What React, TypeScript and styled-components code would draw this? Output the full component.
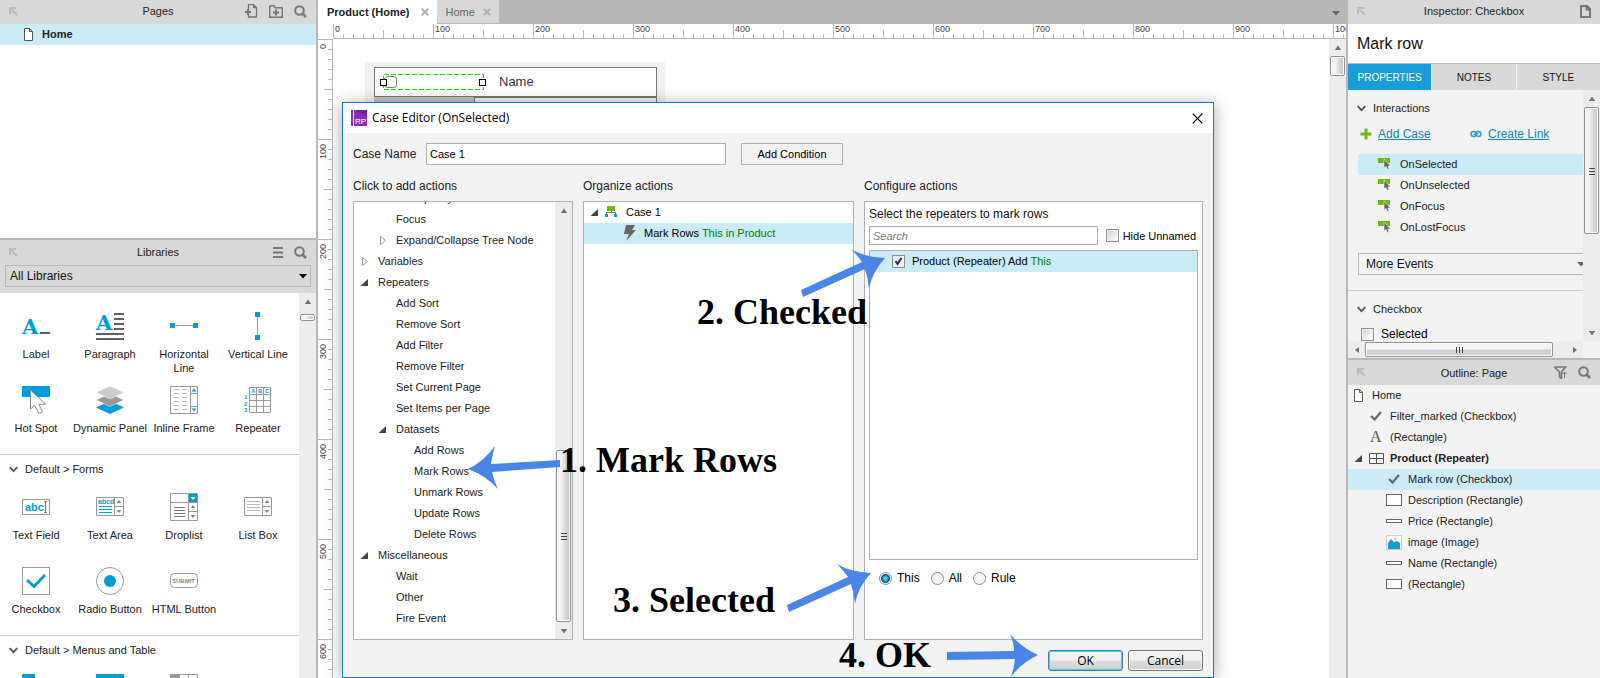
import React from 'react';
import styled, { createGlobalStyle, css } from 'styled-components';

const c = {
  blue: '#009ddc',
  select: '#cbebf6',
  head: '#d9d9d9',
  line: '#b8b8b8',
  panel: '#f3f3f3',
  icon: '#777777',
  dark: '#5f5f5f',
  text: '#222222',
};

const Global = createGlobalStyle`
  *, *::before, *::after { box-sizing: border-box; }
  body {
    margin: 0;
    background: #ffffff;
    color: ${c.text};
    font: 11px/14px "Liberation Sans", Arial, sans-serif;
  }
  button, input, select { font: inherit; color: inherit; margin: 0; }
  ul { list-style: none; margin: 0; padding: 0; }
  h1, h2, h3 { font: inherit; margin: 0; }
  svg { display: block; flex: none; }
`;

const Shell = styled.div`
  position: relative;
  display: grid;
  grid-template-columns: 318px minmax(0, 1fr) 254px;
  height: 100vh;
  overflow: hidden;
`;

/* ---------- shared panel parts ---------- */

const Side = styled.aside<{ $right?: boolean }>`
  display: flex;
  flex-direction: column;
  min-height: 0;
  overflow: hidden;
  background: ${p => (p.$right ? c.panel : '#ffffff')};
  ${p => (p.$right ? 'border-left' : 'border-right')}: 2px solid ${c.line};
`;

const Pane = styled.section<{ $basis?: number }>`
  display: flex;
  flex-direction: column;
  flex: ${p => (p.$basis ? `0 0 ${p.$basis}px` : '1 1 0')};
  min-height: 0;
  ${p => p.$basis && css`border-bottom: 2px solid ${c.line};`}
`;

const Head = styled.header<{ $top?: boolean }>`
  display: grid;
  grid-template-columns: 1fr auto 1fr;
  align-items: center;
  flex: none;
  height: 24px;
  padding: 0 9px ${p => (p.$top ? 2 : 0)}px;
  background: ${c.head};
`;

const Tools = styled.div`
  display: flex;
  align-items: center;
  justify-content: flex-end;
  gap: 11px;
`;

const IconButton = styled.button`
  display: flex;
  padding: 0;
  border: 0;
  background: none;
  color: ${c.icon};
`;

const Row = styled.li<{ $active?: boolean; $bold?: boolean; $indent?: number; $gap?: number }>`
  display: flex;
  align-items: center;
  gap: ${p => p.$gap ?? 8}px;
  height: 21px;
  padding-bottom: 1px;
  padding-left: ${p => p.$indent ?? 0}px;
  background: ${p => (p.$active ? c.select : 'transparent')};
  font-weight: ${p => (p.$bold ? 700 : 400)};
  white-space: nowrap;
`;

const SelectWrap = styled.div<{ $bleed?: boolean }>`
  display: grid;
  align-items: center;
  flex: none;
  margin: ${p => (p.$bleed ? '0 -3px 0 10px' : '1px 5px 6px')};
  & > * { grid-area: 1 / 1; }
  & > svg { justify-self: end; margin-right: ${p => (p.$bleed ? 1 : 4)}px; pointer-events: none; }
`;

const Select = styled.select<{ $inset?: number }>`
  appearance: none;
  width: 100%;
  height: 22px;
  padding: 0 ${p => p.$inset ?? 4}px;
  border: 1px solid ${c.line};
  border-radius: 0;
  background: transparent;
  color: #111111;
  font-size: 12px;
`;

/* ---------- scroll bars ---------- */

const Bar = styled.div<{ $across?: boolean }>`
  display: flex;
  flex: none;
  flex-direction: ${p => (p.$across ? 'row' : 'column')};
  align-items: center;
  ${p => (p.$across ? 'height: 17px;' : 'width: 17px;')}
  background: #ededed;
`;
const BarEnd = styled.div`
  display: grid;
  place-items: center;
  flex: none;
  width: 17px;
  height: 17px;
`;
const Room = styled.div`
  flex: 1;
`;
const Thumb = styled.div<{ $across?: boolean; $size: number; $lead?: number }>`
  display: grid;
  place-items: center;
  flex: none;
  border: 1px solid #929292;
  border-radius: 2px;
  box-shadow: inset 0 0 0 1px #ffffff;
  ${p => p.$across
    ? css`width: ${p.$size}px; height: 15px; background: linear-gradient(#f4f4f4 45%, #d0d0d6 55%, #cfcfd4);`
    : css`height: ${p.$size}px; width: 15px; margin-top: ${p.$lead ?? 0}px; background: linear-gradient(90deg, #f4f4f4 30%, #d4d4d9 70%, #c4c4c8);`}
`;

const Tri = ({ dir }: { dir: 'up' | 'down' | 'left' | 'right' }) => {
  const pts = { up: '4,1.5 7.2,6 0.8,6', down: '0.8,2 7.2,2 4,6.5', left: '2,4 6,1 6,7', right: '6,4 2,1 2,7' }[dir];
  return <svg width="8" height="8"><polygon points={pts} fill="#707070" /></svg>;
};
const Grip = ({ across }: { across?: boolean }) => (
  <svg width="8" height="8" shapeRendering="crispEdges">
    <path d={across ? 'M1 1v6M4 1v6M7 1v6' : 'M1 1h6M1 4h6M1 7h6'} stroke="#444" />
  </svg>
);
type BarProps = { size: number; lead?: number; end?: boolean; grip?: boolean; stick?: boolean };
const VBar = ({ size, lead, end, grip, stick }: BarProps) => (
  <Bar>
    <BarEnd><Tri dir="up" /></BarEnd>
    {stick && <Room />}
    <Thumb $size={size} $lead={lead}>{grip && <Grip />}</Thumb>
    {!stick && <Room />}
    {end && <BarEnd><Tri dir="down" /></BarEnd>}
  </Bar>
);

/* ---------- small icons ---------- */

const Corner = () => (
  <svg width="9" height="9"><path d="M1 7V1H7M1.500 1.500L8 8" fill="none" stroke="#bcbcbc" strokeWidth="2" /></svg>
);
const Search = () => (
  <svg width="13" height="13" fill="none" stroke={c.icon} strokeWidth="2">
    <circle cx="5.500" cy="5.500" r="4.300" /><path d="M8.500 8.500L12 12" strokeWidth="2.500" />
  </svg>
);
const AddPage = () => (
  <svg width="13" height="14" fill="none" stroke={c.icon}>
    <path d="M3.500 6V.5H8.500L11.500 3.500V13H3.500V10.500M8.500 .5V3.500H11.500" strokeWidth="1.300" />
    <path d="M0 8H6M3 5V11" strokeWidth="2" />
  </svg>
);
const AddFolder = () => (
  <svg width="14" height="13" fill="none" stroke={c.icon}>
    <path d="M.7 1V12.300H13.300V2.700H6L5 .7H.7" strokeWidth="1.400" /><path d="M4 7.500H10M7 4.500V10.500" strokeWidth="2" />
  </svg>
);
const Page = ({ bold }: { bold?: boolean }) => (
  <svg width="11" height="13" fill={bold ? 'none' : '#fff'} stroke={bold ? c.icon : '#555'} strokeWidth={bold ? 2 : 1}>
    <path d={bold ? 'M1 1H7L10 4V12H1ZM6.500 1V4.500H10' : 'M1.500 .5H6.500L9.500 3.500V12.500H1.500ZM6.500 .5V3.500H9.500'} />
  </svg>
);
const Bars = () => <svg width="10" height="11"><path d="M0 1H10M0 5.500H10M0 10H10" stroke={c.icon} strokeWidth="2" /></svg>;
const Filter = () => (
  <svg width="13" height="13" fill="none" stroke={c.icon}>
    <path d="M.5 1H11.500L7.500 6V12.500L5.500 11V6L.5 1" strokeWidth="1.600" /><path d="M10.500 12V6M8.500 8L10.500 6L12.500 8" />
  </svg>
);
const Chevron = () => <svg width="9" height="7"><path d="M.7 1.200L4.500 5.200L8.300 1.200" fill="none" stroke="#555" strokeWidth="1.800" /></svg>;
const Caret = ({ small }: { small?: boolean }) => (
  <svg width="8" height="5"><polygon points="0,0 8,0 4,4.500" fill={small ? '#666' : '#000'} /></svg>
);
const Open = () => <svg width="9" height="9"><polygon points="8,1 8,8 0.500,8" fill="#444" /></svg>;
const Closed = () => <svg width="9" height="9"><polygon points="2.500,0.500 7.500,4.500 2.500,8.500" fill="#fff" stroke="#999" /></svg>;
const CloseX = ({ size = 8, color = '#b2b2b2', width = 2 }: { size?: number; color?: string; width?: number }) => (
  <svg width={size} height={size} viewBox={`0 0 ${size} ${size}`}>
    <path d={`M.7 .7L${size - 0.7} ${size - 0.7}M${size - 0.7} .7L.7 ${size - 0.7}`} stroke={color} strokeWidth={width} />
  </svg>
);
const Plus = () => <svg width="12" height="12"><path d="M.5 6H11.500M6 .5V11.500" stroke="#72b52c" strokeWidth="3" /></svg>;
const Chain = () => (
  <svg width="12" height="8" fill="none" stroke="#2a9fd6" strokeWidth="1.500">
    <path d="M6.500 4.500C6.500 6 5 6.500 3.500 6.500C.3 6.500 .3 1.500 3.500 1.500C5 1.500 5.500 2.500 6 3.500H8.500" />
    <path d="M5.500 3.500C5.500 2 7 1.500 8.500 1.500C11.700 1.500 11.700 6.500 8.500 6.500C7 6.500 6.500 5.500 6 4.500H3.500" />
  </svg>
);
const EventIcon = () => (
  <svg width="13" height="12">
    <rect width="12" height="5" fill="#6fb900" />
    <polygon points="6,1 6,10 8,8.500 9.500,11.500 11,11 10,8 12.500,8" fill="#666" stroke="#f3f3f3" strokeWidth=".6" />
  </svg>
);
const Tick = () => <svg width="12" height="10"><path d="M1 5L4.500 8.500L11 1" fill="none" stroke="#666" strokeWidth="2.200" /></svg>;
const CaseIcon = () => (
  <svg width="12" height="12" shapeRendering="crispEdges">
    <path d="M6 4V7M1.500 9V6.500H10.500V9" fill="none" stroke="#777" />
    <rect x="2" width="8" height="5" fill="#6fb900" /><rect y="8" width="3" height="3" fill={c.blue} /><rect x="9" y="8" width="3" height="3" fill={c.blue} />
  </svg>
);
const Bolt = () => <svg width="12" height="16"><polygon points="2,0 11,0 8,5 12,5 2,16 5,9 0,9" fill="#666" /></svg>;
const Grid = () => (
  <svg width="15" height="11"><path d="M.5 .5H14.500V10.500H.5ZM7.500 .5V10.500M.5 5.500H14.500" fill="#fff" stroke="#555" /></svg>
);
const Box = ({ h }: { h: number }) => (
  <svg width="16" height={h}><rect x=".5" y=".5" width="15" height={h - 1} fill="#fff" stroke="#666" /></svg>
);
const ImageIcon = () => (
  <svg width="16" height="15"><rect x=".5" y=".5" width="15" height="14" fill="#fff" stroke="#ccc" /><path d="M2 14V8L5 4L8 7L11 6L14 8V14Z" fill="#159bd7" /><circle cx="9" cy="3.500" r="1.200" fill="#ccc" /></svg>
);
const Letter = () => (
  <svg width="12" height="18"><text x="0" y="14" fontFamily="Liberation Serif, serif" fontSize="16" fill="#555">A</text></svg>
);

/* ---------- library ---------- */

const Art = ({ children }: { children: React.ReactNode }) => (
  <svg width="28" height="28" fill="none" stroke="#999" overflow="visible">{children}</svg>
);
const serif = { fontFamily: 'DejaVu Serif, serif', fontWeight: 700, fontSize: 21, fill: c.blue, stroke: 'none' };
const sans = { fontFamily: 'Liberation Sans, sans-serif', fontWeight: 700, fill: c.blue, stroke: 'none' };

const art: Record<string, React.ReactNode> = {
  Label: <><text x="0" y="22" {...serif}>A</text><path d="M18 21H28" stroke={c.dark} strokeWidth="2" /></>,
  Paragraph: <><text x="0" y="18" {...serif}>A</text><path d="M18 2H28M18 7H28M18 12H28M18 17H28M0 22H28M0 27H28" stroke={c.dark} strokeWidth="2" /></>,
  'Horizontal\nLine': <><path d="M2 13.500H26" /><path d="M0 11h5v5h-5zM23 11h5v5h-5z" fill={c.blue} stroke="none" /></>,
  'Vertical Line': <><path d="M13.500 2V26" /><path d="M11 0h5v5h-5zM11 23h5v5h-5z" fill={c.blue} stroke="none" /></>,
  'Hot Spot': <><rect width="28" height="11" fill={c.blue} stroke="none" /><polygon points="8.500,4 8.500,23 12.500,19.500 17,27.500 20.500,26 17,18.500 23.500,18" fill="#fff" stroke="#888" /></>,
  'Dynamic Panel': <g stroke="none"><polygon points="0,21.500 14,15 28,21.500 14,28" fill={c.blue} /><polygon points="0,14 14,7.500 28,14 14,20.500" fill="#999" stroke="#fff" strokeWidth=".5" /><polygon points="0,6.500 14,0 28,6.500 14,13" fill="#ccc" stroke="#fff" strokeWidth=".5" /></g>,
  'Inline Frame': <><path d="M.5 .5H27.500V27.500H.5ZM20.500 .5V27.500M20.500 7.500H27.500M20.500 20.500H27.500" /><path d="M4 3.500H9M12 3.500H17M4 7.500H9M12 7.500H17M4 11.500H9M12 11.500H17M4 15.500H9M12 15.500H17M4 19.500H9M12 19.500H17M4 23.500H9M12 23.500H17" stroke="#bbb" /><path d="M24 2.500L26.500 5.500H21.500ZM24 25.500L26.500 22.500H21.500Z" fill={c.blue} stroke="none" /></>,
  Repeater: <><path d="M5.500 1.500H26.500V26.500H5.500ZM12.500 1.500V26.500M19.500 1.500V26.500M5.500 8.500H26.500M5.500 14.500H26.500M5.500 20.500H26.500" /><g fontSize="6" {...sans}><text x="7" y="7">A</text><text x="14" y="7">B</text><text x="21" y="7">C</text><text x="0" y="13">1</text><text x="0" y="20">2</text><text x="0" y="26">3</text></g></>,
  'Text Field': <><rect x=".5" y="6.500" width="27" height="15" /><text x="3" y="18" fontSize="11" {...sans}>abc</text><path d="M23.500 9V19M22 8.500H25M22 19.500H25" stroke="#777" /></>,
  'Text Area': <><path d="M.5 4.500H27.500V22.500H.5ZM18.500 4.500V22.500M18.500 13.500H27.500" /><text x="2" y="11" fontSize="7" {...sans}>abcd</text><path d="M3 13.500H16M3 16.500H16M3 19.500H16" stroke={c.blue} /><path d="M23 7L25.500 10H20.500ZM23 20L25.500 17H20.500Z" fill="#888" stroke="none" /></>,
  Droplist: <><path d="M.5 .5H27.500V27.500H.5ZM18.500 .5V27.500M.5 9.500H27.500M18.500 18.500H27.500" /><rect x="19" y="1" width="8" height="8" fill={c.blue} stroke="none" /><path d="M20.500 4H25.500L23 7Z" fill="#fff" stroke="none" /><path d="M4 14.500H15M4 17.500H15M4 20.500H15M4 23.500H15" stroke="#777" /><path d="M23 12L25.500 15H20.500ZM23 25L25.500 22H20.500Z" fill="#888" stroke="none" /></>,
  'List Box': <><path d="M.5 4.500H27.500V22.500H.5ZM18.500 4.500V22.500M18.500 13.500H27.500" /><path d="M3 8.500H16M3 11.500H16M3 14.500H16M3 17.500H16" stroke="#bbb" /><path d="M23 7L25.500 10H20.500ZM23 20L25.500 17H20.500Z" fill="#888" stroke="none" /></>,
  Checkbox: <><rect x=".5" y=".5" width="27" height="27" /><path d="M5 13L12 19.500L23 8" stroke={c.blue} strokeWidth="3" /></>,
  'Radio Button': <><circle cx="14" cy="14" r="13.500" /><circle cx="14" cy="14" r="6" fill={c.blue} stroke="none" /></>,
  'HTML Button': <><rect x=".5" y="6.500" width="27" height="14" rx="4" /><text x="2" y="16" fontSize="6" {...sans} fill="#888">SUBMIT</text></>,
  menuIcon: <path d="M0 0H13V28H0Z" fill={c.blue} stroke="none" />,
  barIcon: <path d="M0 0H28V9H0Z" fill={c.blue} stroke="none" />,
  tableIcon: <><path d="M.5 .5H27.500V27.500H.5ZM9.500 .5V27.500M18.500 .5V27.500" /><rect width="9" height="9" fill="#999" stroke="none" /></>,
};

const Scroller = styled.div`
  display: flex;
  flex: 1;
  min-height: 0;
  overflow: hidden;
`;
const Content = styled.div`
  flex: 1;
  min-width: 0;
  overflow: hidden;
`;
const Shelf = styled.ul<{ $first?: boolean }>`
  display: grid;
  grid-template-columns: repeat(4, 74px);
  row-gap: 11px;
  padding: ${p => (p.$first ? 19 : 10)}px 0 5px;
  border-bottom: 1px solid #cccccc;
`;
const Widget = styled.li`
  display: flex;
  flex-direction: column;
  align-items: center;
  gap: 7px;
  padding-right: 2px;
  text-align: center;
`;
const WidgetName = styled.span`
  height: 28px;
  white-space: pre;
`;
const SectionHead = styled.h3<{ $tall?: boolean }>`
  display: flex;
  align-items: center;
  gap: 7px;
  height: ${p => (p.$tall ? 36 : 28)}px;
  padding-left: 9px;
`;
const LibraryPick = styled.div`
  display: flow-root;
  flex: none;
  background: ${c.head};
`;

const Widgets = ({ names, first }: { names: string[]; first?: boolean }) => (
  <Shelf $first={first}>
    {names.map(n => (
      <Widget key={n}>
        <Art>{art[n]}</Art>
        {!n.endsWith('Icon') && <WidgetName>{n}</WidgetName>}
      </Widget>
    ))}
  </Shelf>
);

const LeftSide = () => (
  <Side>
    <Pane $basis={240}>
      <Head $top>
        <Corner />
        <h2>Pages</h2>
        <Tools>
          <IconButton aria-label="Add page"><AddPage /></IconButton>
          <IconButton aria-label="Add folder"><AddFolder /></IconButton>
          <IconButton aria-label="Search pages"><Search /></IconButton>
        </Tools>
      </Head>
      <ul><Row $active $bold $indent={23}><Page />Home</Row></ul>
    </Pane>
    <Pane>
      <Head>
        <Corner />
        <h2>Libraries</h2>
        <Tools>
          <IconButton aria-label="Library menu"><Bars /></IconButton>
          <IconButton aria-label="Search libraries"><Search /></IconButton>
        </Tools>
      </Head>
      <LibraryPick>
        <SelectWrap>
          <Select aria-label="Library" defaultValue="all"><option value="all">All Libraries</option></Select>
          <Caret />
        </SelectWrap>
      </LibraryPick>
      <Scroller>
        <Content>
          <Widgets first names={['Label', 'Paragraph', 'Horizontal\nLine', 'Vertical Line', 'Hot Spot', 'Dynamic Panel', 'Inline Frame', 'Repeater']} />
          <SectionHead><Chevron />Default &gt; Forms</SectionHead>
          <Widgets names={['Text Field', 'Text Area', 'Droplist', 'List Box', 'Checkbox', 'Radio Button', 'HTML Button']} />
          <SectionHead><Chevron />Default &gt; Menus and Table</SectionHead>
          <Widgets names={['menuIcon', 'barIcon', 'tableIcon']} />
        </Content>
        <VBar size={7} lead={4} />
      </Scroller>
    </Pane>
  </Side>
);

/* ---------- canvas ---------- */

const Main = styled.main`
  display: flex;
  flex-direction: column;
  min-width: 0;
  min-height: 0;
`;
const Tabs = styled.nav`
  display: flex;
  align-items: flex-start;
  flex: none;
  height: 24px;
  background: ${c.line};
`;
const Tab = styled.button<{ $active?: boolean }>`
  display: flex;
  align-items: center;
  gap: ${p => (p.$active ? 11 : 8)}px;
  height: ${p => (p.$active ? 24 : 23)}px;
  padding: 0 8px 0 9px;
  border: 0;
  background: ${p => (p.$active ? '#ffffff' : c.head)};
  color: ${p => (p.$active ? c.text : '#666666')};
  font-weight: ${p => (p.$active ? 700 : 400)};
`;
const TabMenu = styled(IconButton)`
  margin: 11px 6px 0 auto;
`;
const RulerRow = styled.div`
  display: flex;
  flex: none;
  height: 15px;
  padding-left: 15px;
`;
const Across = styled.div`
  display: flex;
  flex: 1;
  overflow: hidden;
  border-bottom: 1px solid ${c.line};
`;
const Mark = styled.div<{ $down?: boolean }>`
  flex: 0 0 100px;
  color: #444444;
  font-size: 9px;
  line-height: 11px;
  ${p => p.$down
    ? css`
      padding-top: 5px;
      background:
        linear-gradient(${c.line}, ${c.line}) 0 0 / 100% 1px no-repeat,
        linear-gradient(${c.line}, ${c.line}) 100% 50px / 8px 1px no-repeat,
        repeating-linear-gradient(${c.line} 0 1px, transparent 1px 10px) 100% 0 / 4px 100% no-repeat;
    `
    : css`
      padding-left: 2px;
      background:
        linear-gradient(${c.line}, ${c.line}) 0 0 / 1px 100% no-repeat,
        linear-gradient(${c.line}, ${c.line}) 50px 100% / 1px 8px no-repeat,
        repeating-linear-gradient(90deg, ${c.line} 0 1px, transparent 1px 10px) 0 100% / 100% 4px no-repeat;
    `}
`;
const Turned = styled.span`
  display: block;
  width: 11px;
  writing-mode: vertical-rl;
  transform: rotate(180deg);
`;
const Work = styled.div`
  display: flex;
  flex: 1;
  min-height: 0;
`;
const Down = styled.div`
  display: flex;
  flex-direction: column;
  flex: none;
  width: 15px;
  overflow: hidden;
  border-right: 1px solid ${c.line};
`;
const Stage = styled.div`
  position: relative;
  flex: 1;
  overflow: hidden;
`;
const RepeaterShape = styled.div`
  position: absolute;
  left: 32px;
  top: 23px;
  width: 300px;
  height: 120px;
  padding: 5px 8px 0 9px;
  background: #f1f1f1;
`;
const ShapeRow = styled.div`
  display: flex;
  align-items: center;
  height: 30px;
  padding: 0 0 1px 5px;
  gap: 11px;
  border: 1px solid #777777;
  background: #ffffff;
  font-size: 13px;
  color: #333333;
`;
const ShapeCells = styled.div`
  display: grid;
  grid-template-columns: 100px 1fr;
  height: 60px;
  background: #c2c2c2;
  &::after {
    content: '';
    grid-column: 2;
    border: 1px solid #777777;
    background: #f1f1f1;
  }
`;
const Selection = () => (
  <svg width="108" height="18" fill="none" shapeRendering="crispEdges">
    <rect x="3.500" y="1.500" width="100" height="15" stroke="#00f000" strokeDasharray="5 2" />
    <rect x="4.500" y="3.500" width="12" height="11" rx="3" fill="#fff" stroke="#777" shapeRendering="auto" />
    <rect x=".5" y="6.500" width="6" height="6" fill="#fff" stroke="#000" /><rect x="99.500" y="6.500" width="6" height="6" fill="#fff" stroke="#000" />
  </svg>
);

const Canvas = () => (
  <Main>
    <Tabs>
      <Tab $active>Product (Home)<CloseX /></Tab>
      <Tab>Home<CloseX /></Tab>
      <TabMenu aria-label="Open pages"><Caret small /></TabMenu>
    </Tabs>
    <RulerRow>
      <Across>{Array.from({ length: 11 }, (_, i) => <Mark key={i}>{i * 100}</Mark>)}</Across>
    </RulerRow>
    <Work>
      <Down>{Array.from({ length: 7 }, (_, i) => <Mark key={i} $down><Turned>{i * 100}</Turned></Mark>)}</Down>
      <Stage>
        <RepeaterShape>
          <ShapeRow><Selection />Name</ShapeRow>
          <ShapeCells />
        </RepeaterShape>
      </Stage>
      <VBar size={20} />
    </Work>
  </Main>
);

/* ---------- inspector and outline ---------- */

const WidgetTitle = styled.h1`
  flex: none;
  height: 40px;
  padding-left: 9px;
  border-bottom: 1px solid #bbbbbb;
  background: #ffffff;
  color: #111111;
  font-size: 16px;
  line-height: 39px;
`;
const PropTabs = styled.nav`
  display: grid;
  grid-template-columns: repeat(3, 1fr);
  gap: 1px;
  flex: none;
  height: 26px;
  background: #f3f3f3;
`;
const PropTab = styled.button<{ $active?: boolean }>`
  padding: 1px 0 0;
  border: 0;
  background: ${p => (p.$active ? '#189dd9' : c.head)};
  color: ${p => (p.$active ? '#ffffff' : '#111111')};
  font-size: 10px;
`;
const LinkRow = styled.div`
  display: flex;
  height: 16px;
  margin-bottom: 12px;
  padding-left: 12px;
`;
const LinkItem = styled.span`
  display: flex;
  align-items: center;
  gap: 6px;
  flex: 0 0 110px;
`;
const Link = styled.a`
  color: #1583bb;
  font-size: 12px;
  text-decoration: underline;
`;
const Events = styled.ul`
  margin: 0 0 15px 10px;
`;
const Rule = styled.hr`
  height: 1px;
  margin: 15px 0 0;
  border: 0;
  background: #cccccc;
`;
const Check = styled.input`
  appearance: none;
  flex: none;
  width: 13px;
  height: 13px;
  border: 1px solid #8e8f8f;
  background: linear-gradient(135deg, #cfd2d8, #ffffff) content-box, #f4f4f4;
  padding: 1px;
  &:checked {
    background:
      url("data:image/svg+xml,%3Csvg xmlns='http://www.w3.org/2000/svg' width='11' height='11'%3E%3Cpath d='M2.500 5L4.500 8L8.500 2' fill='none' stroke='%23282878' stroke-width='2'/%3E%3C/svg%3E") center no-repeat border-box,
      #f1f1f6;
  }
`;
const Field = styled.label<{ $big?: boolean; $inset?: number; $gap?: number }>`
  display: flex;
  align-items: center;
  gap: ${p => p.$gap ?? 7}px;
  padding-left: ${p => p.$inset ?? 0}px;
  color: #000000;
  font-size: ${p => (p.$big ? 12 : 11)}px;
  white-space: nowrap;
`;
const AcrossFoot = styled.div`
  padding-right: 17px;
`;
const OutlineHead = styled(Head)`
  height: 25px;
`;

const RightSide = () => (
  <Side $right>
    <Pane $basis={360}>
      <Head $top>
        <Corner />
        <h2>Inspector: Checkbox</h2>
        <Tools><IconButton aria-label="Page properties"><Page bold /></IconButton></Tools>
      </Head>
      <WidgetTitle>Mark row</WidgetTitle>
      <PropTabs>
        <PropTab $active>PROPERTIES</PropTab>
        <PropTab>NOTES</PropTab>
        <PropTab>STYLE</PropTab>
      </PropTabs>
      <Scroller>
        <Content>
          <SectionHead $tall><Chevron />Interactions</SectionHead>
          <LinkRow>
            <LinkItem><Plus /><Link href="#add-case">Add Case</Link></LinkItem>
            <LinkItem><Chain /><Link href="#create-link">Create Link</Link></LinkItem>
          </LinkRow>
          <Events>
            {['OnSelected', 'OnUnselected', 'OnFocus', 'OnLostFocus'].map((e, i) => (
              <Row key={e} $active={i === 0} $indent={20} $gap={9}><EventIcon />{e}</Row>
            ))}
          </Events>
          <SelectWrap $bleed>
            <Select $inset={7} aria-label="More events" defaultValue="more"><option value="more">More Events</option></Select>
            <Caret small />
          </SelectWrap>
          <Rule />
          <SectionHead $tall><Chevron />Checkbox</SectionHead>
          <Field $big $inset={13}><Check type="checkbox" />Selected</Field>
        </Content>
        <VBar size={127} end grip />
      </Scroller>
      <AcrossFoot>
        <Bar $across>
          <BarEnd><Tri dir="left" /></BarEnd>
          <Thumb $across $size={188}><Grip across /></Thumb>
          <Room />
          <BarEnd><Tri dir="right" /></BarEnd>
        </Bar>
      </AcrossFoot>
    </Pane>
    <Pane>
      <OutlineHead>
        <Corner />
        <h2>Outline: Page</h2>
        <Tools>
          <IconButton aria-label="Filter outline"><Filter /></IconButton>
          <IconButton aria-label="Search outline"><Search /></IconButton>
        </Tools>
      </OutlineHead>
      <ul>
        <Row $indent={5}><Page />Home</Row>
        <Row $indent={22}><Tick />Filter_marked (Checkbox)</Row>
        <Row $indent={22}><Letter />(Rectangle)</Row>
        <Row $bold $indent={6} $gap={6}><Open /><Grid />Product (Repeater)</Row>
        <Row $active $indent={40}><Tick />Mark row (Checkbox)</Row>
        <Row $indent={38} $gap={6}><Box h={12} />Description (Rectangle)</Row>
        <Row $indent={38} $gap={6}><Box h={4} />Price (Rectangle)</Row>
        <Row $indent={38} $gap={6}><ImageIcon />image (Image)</Row>
        <Row $indent={38} $gap={6}><Box h={4} />Name (Rectangle)</Row>
        <Row $indent={38} $gap={6}><Box h={10} />(Rectangle)</Row>
      </ul>
    </Pane>
  </Side>
);

/* ---------- case editor window ---------- */

const Dialog = styled.section`
  position: absolute;
  left: 342px;
  top: 102px;
  bottom: 0;
  width: 872px;
  display: flex;
  flex-direction: column;
  border: 1px solid #0f7ad0;
  background: ${c.panel};
  box-shadow: 0 2px 16px rgba(0, 0, 0, 0.35);
`;
const TitleBar = styled.header`
  display: flex;
  align-items: center;
  gap: 5px;
  flex: none;
  height: 30px;
  padding: 0 10px 0 8px;
  background: #ffffff;
  color: #000000;
  font: 12px/16px "Open Sans", "Segoe UI", sans-serif;
  & > button { margin-left: auto; }
`;
const NameRow = styled.div`
  display: flex;
  align-items: center;
  flex: none;
  padding: 10px 10px 0;
`;
const CaseLabel = styled.label`
  flex: 0 0 73px;
  font-size: 12px;
`;
const TextBox = styled.input<{ $search?: boolean }>`
  min-width: 0;
  height: ${p => (p.$search ? 19 : 22)}px;
  flex: ${p => (p.$search ? '1 1 0' : '0 0 300px')};
  padding: 0 3px;
  border: 1px solid #b0b0b0;
  background: #ffffff;
  color: #000000;
  &::placeholder { color: #777777; font-style: italic; opacity: 1; }
`;
const FlatButton = styled.button`
  width: 102px;
  height: 22px;
  margin-left: 15px;
  padding: 0;
  border: 1px solid #b0b0b0;
  background: ${c.panel};
  color: #000000;
`;
const Columns = styled.div`
  display: grid;
  grid-template: 36px minmax(0, 1fr) / 220px 271px minmax(0, 1fr);
  column-gap: 10px;
  flex: 1;
  min-height: 0;
  padding: 0 10px;
`;
const ColumnTitle = styled.h3`
  align-self: end;
  padding-bottom: 8px;
  font-size: 12px;
`;
const Well = styled.div<{ $stack?: boolean }>`
  display: flex;
  flex-direction: ${p => (p.$stack ? 'column' : 'row')};
  min-width: 0;
  overflow: hidden;
  border: 1px solid #b0b0b0;
  background: #ffffff;
  padding: ${p => (p.$stack ? '4px' : '0')};
`;
const ActionTree = styled.ul`
  flex: 1;
  margin-top: -14px;
`;
const CaseTree = styled.ul`
  flex: 1;
  color: #000000;
`;
const CaseName = styled.span`
  padding-left: 3px;
`;
const Green = styled.span`
  color: #008000;
`;
const Hint = styled.p`
  flex: none;
  margin: 0 0 4px;
  font-size: 12px;
  line-height: 16px;
  color: #111111;
`;
const SearchRow = styled.div`
  display: flex;
  align-items: center;
  gap: 8px;
  flex: none;
  padding-right: 2px;
`;
const RepeaterList = styled.div`
  flex: 1;
  margin: 5px 0 10px;
  border: 1px solid #b0b0b0;
`;
const RepeaterRow = styled(Field)`
  height: 21px;
  padding-bottom: 1px;
  background: ${c.select};
`;
const Radios = styled.div`
  display: flex;
  gap: 11px;
  flex: none;
  height: 65px;
  padding: 1px 0 0 10px;
  align-items: flex-start;
`;
const Radio = styled.input`
  appearance: none;
  flex: none;
  width: 13px;
  height: 13px;
  border: 1px solid #8e8f8f;
  border-radius: 50%;
  background: #f4f4f4;
  &:checked { background: radial-gradient(circle at 50% 50%, #5cc8ee 0 1px, #1488bb 3px, #0f4a6e 4px, #f4f4f4 5px); }
`;
const Foot = styled.footer`
  display: flex;
  justify-content: flex-end;
  gap: 5px;
  flex: none;
  height: 37px;
  padding: 10px 10px 0;
`;
const PushButton = styled.button<{ $primary?: boolean }>`
  width: 75px;
  height: 21px;
  padding: 0;
  border: 1px solid ${p => (p.$primary ? '#3c7fb1' : '#707070')};
  border-radius: 3px;
  box-shadow: inset 0 0 0 1px ${p => (p.$primary ? '#48d0f0' : '#fcfcfc')};
  background: linear-gradient(#f2f2f2 45%, #dddddd 55%, #cfcfcf);
  color: #000000;
  font: 12px/16px "Open Sans", "Segoe UI", sans-serif;
`;

const Logo = () => (
  <svg width="16" height="16">
    <rect width="16" height="16" fill="#8f2bb0" /><rect x="2" width="1" height="16" fill="#fff" /><path d="M3 0H16V6Z" fill="#6d2394" />
    <text x="4" y="14" fontFamily="Liberation Sans, sans-serif" fontSize="8" fill="#fff">RP</text>
  </svg>
);

type Node = { name: string; level: number; state?: 'open' | 'closed' };
const actions: Node[] = [
  { name: 'Set Opacity', level: 1 },
  { name: 'Focus', level: 1 },
  { name: 'Expand/Collapse Tree Node', level: 1, state: 'closed' },
  { name: 'Variables', level: 0, state: 'closed' },
  { name: 'Repeaters', level: 0, state: 'open' },
  { name: 'Add Sort', level: 1 },
  { name: 'Remove Sort', level: 1 },
  { name: 'Add Filter', level: 1 },
  { name: 'Remove Filter', level: 1 },
  { name: 'Set Current Page', level: 1 },
  { name: 'Set Items per Page', level: 1 },
  { name: 'Datasets', level: 1, state: 'open' },
  { name: 'Add Rows', level: 2 },
  { name: 'Mark Rows', level: 2 },
  { name: 'Unmark Rows', level: 2 },
  { name: 'Update Rows', level: 2 },
  { name: 'Delete Rows', level: 2 },
  { name: 'Miscellaneous', level: 0, state: 'open' },
  { name: 'Wait', level: 1 },
  { name: 'Other', level: 1 },
  { name: 'Fire Event', level: 1 },
];

const CaseEditor = () => (
  <Dialog role="dialog" aria-labelledby="editor-title">
    <TitleBar>
      <Logo />
      <span id="editor-title">Case Editor (OnSelected)</span>
      <IconButton aria-label="Close"><CloseX size={11} color="#000" width={1.2} /></IconButton>
    </TitleBar>
    <NameRow>
      <CaseLabel htmlFor="case-name">Case Name</CaseLabel>
      <TextBox id="case-name" defaultValue="Case 1" />
      <FlatButton>Add Condition</FlatButton>
    </NameRow>
    <Columns>
      <ColumnTitle>Click to add actions</ColumnTitle>
      <ColumnTitle>Organize actions</ColumnTitle>
      <ColumnTitle>Configure actions</ColumnTitle>
      <Well>
        <ActionTree>
          {actions.map(a => (
            <Row key={a.name} $gap={9} $indent={a.level * 18 + (a.state ? 6 : 24)}>
              {a.state === 'open' && <Open />}
              {a.state === 'closed' && <Closed />}
              {a.name}
            </Row>
          ))}
        </ActionTree>
        <VBar size={172} end grip stick />
      </Well>
      <Well>
        <CaseTree>
          <Row $indent={6} $gap={6}><Open /><CaseIcon /><CaseName>Case 1</CaseName></Row>
          <Row $active $indent={40}><Bolt /><span>Mark Rows <Green>This in Product</Green></span></Row>
        </CaseTree>
      </Well>
      <Well $stack>
        <Hint>Select the repeaters to mark rows</Hint>
        <SearchRow>
          <TextBox $search type="text" placeholder="Search" aria-label="Search repeaters" />
          <Field $gap={4}><Check type="checkbox" />Hide Unnamed</Field>
        </SearchRow>
        <RepeaterList>
          <RepeaterRow $inset={22}>
            <Check type="checkbox" defaultChecked />
            <span>Product (Repeater) Add <Green>This</Green></span>
          </RepeaterRow>
        </RepeaterList>
        <Radios>
          {['This', 'All', 'Rule'].map(r => (
            <Field key={r} $big $gap={5}><Radio type="radio" name="scope" defaultChecked={r === 'This'} />{r}</Field>
          ))}
        </Radios>
      </Well>
    </Columns>
    <Foot>
      <PushButton $primary>OK</PushButton>
      <PushButton>Cancel</PushButton>
    </Foot>
  </Dialog>
);

/* ---------- tutorial notes drawn over the windows ---------- */

const Arrows = styled.svg`
  position: absolute;
  left: 0;
  top: 0;
  pointer-events: none;
  fill: #4a86e8;
`;
const Note = styled.span<{ $x: number; $y: number }>`
  position: absolute;
  left: ${p => p.$x}px;
  top: ${p => p.$y}px;
  color: #000000;
  font: 700 36px/40px "Liberation Serif", "Times New Roman", serif;
  white-space: nowrap;
  pointer-events: none;
`;
const SLANTED = 'M885 258Q864 257 851 249Q858 256 862 262L801 290L803 297L865 269Q868 278 869 289Q872 272 885 258Z';

export default function App() {
  return (
    <Shell>
      <Global />
      <LeftSide />
      <Canvas />
      <RightSide />
      <CaseEditor />
      <Arrows width="1214" height="678">
        <path d="M468 469Q483 462 495 446Q492 456 491 464L560 460V467L492 472Q494 481 498 489Q485 475 468 469Z" />
        <path d={SLANTED} />
        <path d={SLANTED} transform="translate(-14 315)" />
        <path d="M1038 655Q1022 648 1010 634Q1014 643 1014 651L947 652V660L1015 659Q1014 668 1011 677Q1021 663 1038 655Z" />
      </Arrows>
      <Note $x={560} $y={440}>1. Mark Rows</Note>
      <Note $x={697} $y={292}>2. Checked</Note>
      <Note $x={613} $y={580}>3. Selected</Note>
      <Note $x={839} $y={635}>4. OK</Note>
    </Shell>
  );
}
